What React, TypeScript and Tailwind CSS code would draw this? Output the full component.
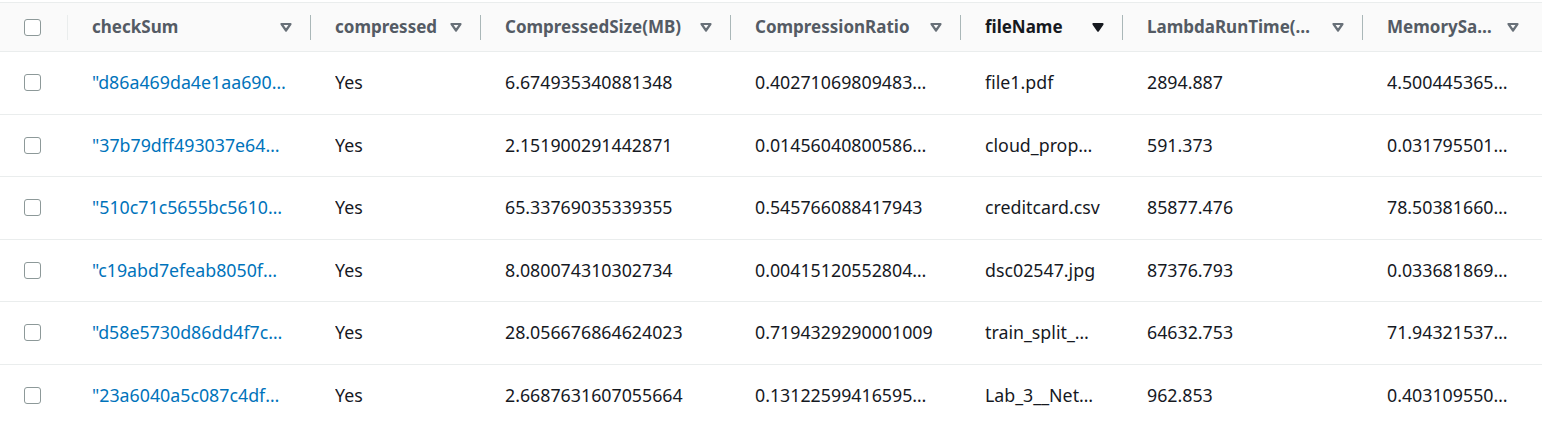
import React from "react";

type Col = {
  key: string;
  label: string;
  width: string;
  cellPad: string;
  sorted?: boolean;
};

const columns: Col[] = [
  { key: "checkSum", label: "checkSum", width: "w-[243px]", cellPad: "pl-[25px] pr-[22.5px]" },
  { key: "compressed", label: "compressed", width: "w-[170px]", cellPad: "pl-[25px] pr-[25px]" },
  { key: "size", label: "CompressedSize(MB)", width: "w-[250px]", cellPad: "pl-[25px] pr-[25px]" },
  { key: "ratio", label: "CompressionRatio", width: "w-[230px]", cellPad: "pl-[25px] pr-[25px]" },
  { key: "fileName", label: "fileName", width: "w-[162px]", cellPad: "pl-[25px] pr-[21px]", sorted: true },
  { key: "runtime", label: "LambdaRunTime(Milliseconds)", width: "w-[240px]", cellPad: "pl-[25px] pr-[25px]" },
  { key: "memory", label: "MemorySaved(MB)", width: "w-[175px]", cellPad: "pl-[25px] pr-[25px]" },
];

const rows = [
  ['"d86a469da4e1aa6904f1c2b3"', "Yes", "6.674935340881348", "0.40271069809483915", "file1.pdf", "2894.887", "4.500445365905762"],
  ['"37b79dff493037e64a2c9e10"', "Yes", "2.151900291442871", "0.014560408005869937", "cloud_propagation.pdf", "591.373", "0.03179550170898438"],
  ['"510c71c5655bc5610e8a7d21"', "Yes", "65.33769035339355", "0.545766088417943", "creditcard.csv", "85877.476", "78.50381660461426"],
  ['"c19abd7efeab8050fd92c44b"', "Yes", "8.080074310302734", "0.004151205528041236", "dsc02547.jpg", "87376.793", "0.03368186950683594"],
  ['"d58e5730d86dd4f7c1b0e6a8"', "Yes", "28.056676864624023", "0.7194329290001009", "train_split_Model.csv", "64632.753", "71.94321537017822"],
  ['"23a6040a5c087c4df9e7b3a1"', "Yes", "2.6687631607055664", "0.13122599416595642", "Lab_3__Networking.pdf", "962.853", "0.40310955047607422"],
];

function Checkbox() {
  return (
    <span className="block w-[17px] h-[17px] rounded-[3px] border-[1.5px] border-[#8d9999] bg-white" />
  );
}

function SortIcon({ active }: { active?: boolean }) {
  return (
    <svg width="14" height="11" viewBox="0 0 14 11" className="shrink-0">
      <path
        d="M2.5 2 L11.5 2 L7 8.5 Z"
        fill={active ? "#16191f" : "none"}
        stroke={active ? "#16191f" : "#687078"}
        strokeWidth="2.2"
        strokeLinejoin="round"
      />
    </svg>
  );
}

export default function App() {
  return (
    <div className="w-[1542px] h-[426px] overflow-hidden bg-white font-['Noto_Sans',sans-serif] text-[17.8px] text-[#16191f]">
      {/* header */}
      <div className="mt-[2px] flex h-[50px] items-center border-y border-[#eaeded] bg-[#fafafa]">
        <div className="flex w-[67px] shrink-0 items-center pl-6">
          <Checkbox />
        </div>
        {columns.map((col, i) => (
          <div
            key={col.key}
            className={`${col.width} relative flex h-full shrink-0 items-center pl-[25px] pr-[17px]`}
          >
            <span
              className={
                i === 0
                  ? "absolute left-0 top-[12px] h-[25px] w-px bg-[#eaeded]"
                  : "absolute left-0 top-[12px] h-[25px] w-px bg-[#aab7b8]"
              }
            />
            <span
              className={
                col.sorted
                  ? "flex-1 truncate text-[17px] font-bold text-[#16191f]"
                  : "flex-1 truncate text-[17px] font-bold text-[#545b64]"
              }
            >
              {col.label}
            </span>
            <span className="ml-2">
              <SortIcon active={col.sorted} />
            </span>
          </div>
        ))}
      </div>

      {/* body */}
      {rows.map((row, r) => (
        <div
          key={r}
          className={
            r === rows.length - 1
              ? "flex h-[62.5px] items-center"
              : "flex h-[62.5px] items-center border-b border-[#eaeded]"
          }
        >
          <div className="flex w-[67px] shrink-0 items-center pl-6">
            <Checkbox />
          </div>
          {columns.map((col, i) => (
            <div key={col.key} className={`${col.width} ${col.cellPad} shrink-0`}>
              <div className={i === 0 ? "truncate text-[#0073bb]" : "truncate"}>
                {row[i]}
              </div>
            </div>
          ))}
        </div>
      ))}
    </div>
  );
}
